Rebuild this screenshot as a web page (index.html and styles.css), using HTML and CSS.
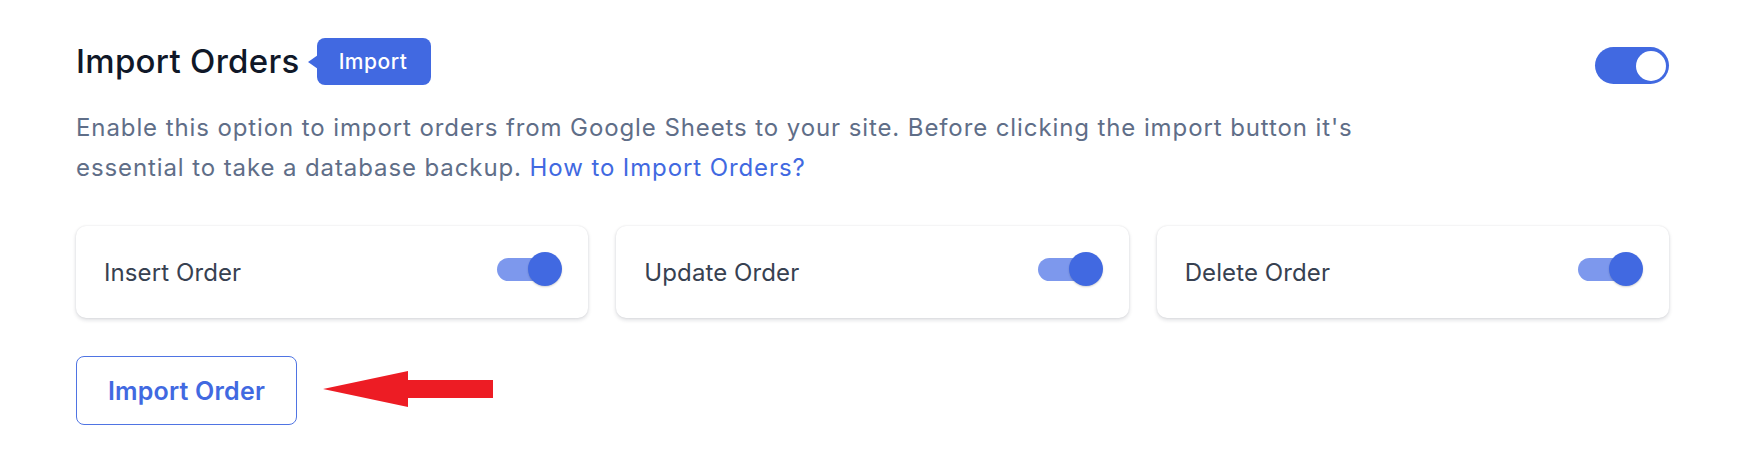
FILE: index.html
```html
<!DOCTYPE html>
<html lang="en">
<head>
<meta charset="utf-8">
<title>Import Orders</title>
<link rel="stylesheet" href="styles.css">
</head>
<body>
<section class="panel">
  <div class="head">
    <div class="title-group">
      <h2 class="title">Import Orders</h2>
      <span class="badge">Import</span>
    </div>
    <span class="toggle" role="switch" aria-checked="true"><span class="toggle-knob"></span></span>
  </div>
  <p class="desc">Enable this option to import orders from Google Sheets to your site. Before clicking the import button it's essential to take a database backup. <a class="link" href="#">How to Import Orders?</a></p>
  <div class="cards">
    <div class="card"><span class="card-label">Insert Order</span><span class="switch" role="switch" aria-checked="true"></span></div>
    <div class="card"><span class="card-label">Update Order</span><span class="switch" role="switch" aria-checked="true"></span></div>
    <div class="card"><span class="card-label">Delete Order</span><span class="switch" role="switch" aria-checked="true"></span></div>
  </div>
  <div class="actions">
    <button class="btn" type="button">Import Order</button>
    <svg class="arrow" width="170" height="36" viewBox="0 0 170 36" aria-hidden="true">
      <polygon points="0,18 85,0 85,9 170,9 170,27 85,27 85,36" fill="#ed1c24"/>
    </svg>
  </div>
</section>
</body>
</html>
```
FILE: styles.css
```css
* { box-sizing: border-box; }
html, body { margin: 0; padding: 0; background: #ffffff; }
body { font-family: Inter, "Noto Sans", "Liberation Sans", sans-serif; }

.panel { padding: 38px 75px 0 76px; }

.head { display: flex; justify-content: space-between; align-items: flex-start; }
.title-group { display: flex; align-items: center; height: 47px; }
.title { margin: 0; font-size: 33px; font-weight: 500; line-height: 47px; color: #101828; letter-spacing: 0.3px; }

.badge {
  position: relative;
  margin-left: 17px;
  height: 47px;
  padding: 0 24px 0 22px;
  display: inline-flex;
  align-items: center;
  background: #4169e1;
  color: #ffffff;
  font-size: 21px;
  font-weight: 500;
  letter-spacing: 0.5px;
  border-radius: 8px;
}
.badge::before {
  content: "";
  position: absolute;
  left: -9px;
  top: 50%;
  margin-top: -7px;
  border-top: 7px solid transparent;
  border-bottom: 7px solid transparent;
  border-right: 10px solid #4169e1;
}

.toggle {
  margin-top: 9px;
  width: 74px;
  height: 37px;
  border-radius: 19px;
  background: #4169e1;
  display: flex;
  justify-content: flex-end;
  align-items: center;
  padding: 0 3.5px;
}
.toggle-knob { width: 30px; height: 30px; border-radius: 50%; background: #ffffff; }

.desc {
  margin: 23px 0 0;
  max-width: 1320px;
  font-size: 24px;
  line-height: 40px;
  letter-spacing: 0.9px;
  color: #5f6e88;
}
.link { color: #4169e1; text-decoration: none; }

.cards {
  margin-top: 38px;
  display: grid;
  grid-template-columns: repeat(3, 1fr);
  gap: 28px;
}
.card {
  height: 92px;
  padding: 0 28px 0 28px;
  display: flex;
  align-items: center;
  justify-content: space-between;
  background: #ffffff;
  border-radius: 10px;
  box-shadow: 0 0 2px rgba(15, 23, 42, 0.10), 0 2px 4px rgba(15, 23, 42, 0.14);
}
.card-label { font-size: 24px; color: #374151; letter-spacing: 0.1px; }

.switch {
  position: relative;
  width: 63px;
  height: 23px;
  margin-bottom: 6px;
  border-radius: 12px;
  background: #7d98ed;
}
.switch::after {
  content: "";
  position: absolute;
  right: -2px;
  top: -5.5px;
  width: 34px;
  height: 34px;
  border-radius: 50%;
  background: #4169e1;
  box-shadow: 0 1px 2px rgba(0, 0, 0, 0.18);
}

.actions {
  margin-top: 38px;
  display: flex;
  align-items: center;
  gap: 26px;
}
.btn {
  width: 221px;
  height: 69px;
  border: 1.5px solid #4f74e3;
  border-radius: 8px;
  background: #ffffff;
  color: #4169e1;
  font-family: Inter, "Noto Sans", "Liberation Sans", sans-serif;
  font-size: 25px;
  font-weight: 600;
  letter-spacing: 0.2px;
  padding: 0;
}
.arrow { display: block; margin-top: -4px; }
```
